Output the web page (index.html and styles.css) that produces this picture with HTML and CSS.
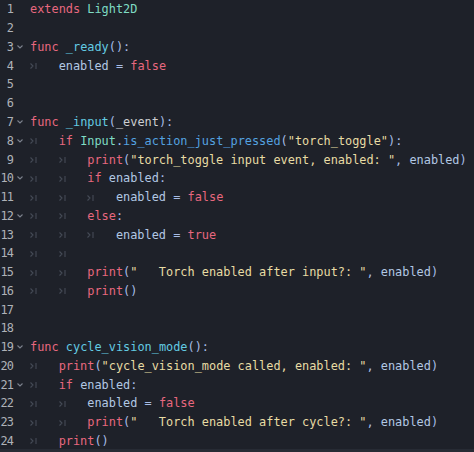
FILE: index.html
```html
<!DOCTYPE html>
<html>
<head>
<meta charset="utf-8">
<link rel="stylesheet" href="styles.css">
</head>
<body>
<div class="editor">
  <div class="line"><span class="num">1</span><span class="fold"></span><span class="code"><span class="kw">extends</span> <span class="ty">Light2D</span></span></div>
  <div class="line"><span class="num">2</span><span class="fold"></span><span class="code"></span></div>
  <div class="line"><span class="num">3</span><span class="fold"><svg viewBox="0 0 6 4" class="chev"><path d="M0.5 0.5 L3 3 L5.5 0.5"/></svg></span><span class="code"><span class="kw">func</span> <span class="fn">_ready</span><span class="sy">():</span></span></div>
  <div class="line"><span class="num">4</span><span class="fold"></span><span class="code"><span class="tab"><svg viewBox="0 0 7 6" class="tm"><path d="M0.5 0.5 L3 3 L0.5 5.5 M6 0 V6"/></svg></span><span class="mv">enabled</span> <span class="sy">=</span> <span class="kw">false</span></span></div>
  <div class="line"><span class="num">5</span><span class="fold"></span><span class="code"></span></div>
  <div class="line"><span class="num">6</span><span class="fold"></span><span class="code"></span></div>
  <div class="line"><span class="num">7</span><span class="fold"><svg viewBox="0 0 6 4" class="chev"><path d="M0.5 0.5 L3 3 L5.5 0.5"/></svg></span><span class="code"><span class="kw">func</span> <span class="fn">_input</span><span class="sy">(</span><span class="tx">_event</span><span class="sy">):</span></span></div>
  <div class="line"><span class="num">8</span><span class="fold"><svg viewBox="0 0 6 4" class="chev"><path d="M0.5 0.5 L3 3 L5.5 0.5"/></svg></span><span class="code"><span class="tab"><svg viewBox="0 0 7 6" class="tm"><path d="M0.5 0.5 L3 3 L0.5 5.5 M6 0 V6"/></svg></span><span class="kw">if</span> <span class="ty">Input</span><span class="sy">.</span><span class="mf">is_action_just_pressed</span><span class="sy">(</span><span class="st">"torch_toggle"</span><span class="sy">):</span></span></div>
  <div class="line"><span class="num">9</span><span class="fold"></span><span class="code"><span class="tab"><svg viewBox="0 0 7 6" class="tm"><path d="M0.5 0.5 L3 3 L0.5 5.5 M6 0 V6"/></svg></span><span class="tab"><svg viewBox="0 0 7 6" class="tm"><path d="M0.5 0.5 L3 3 L0.5 5.5 M6 0 V6"/></svg></span><span class="kw">print</span><span class="sy">(</span><span class="st">"torch_toggle input event, enabled: "</span><span class="sy">, </span><span class="mv">enabled</span><span class="sy">)</span></span></div>
  <div class="line"><span class="num">10</span><span class="fold"><svg viewBox="0 0 6 4" class="chev"><path d="M0.5 0.5 L3 3 L5.5 0.5"/></svg></span><span class="code"><span class="tab"><svg viewBox="0 0 7 6" class="tm"><path d="M0.5 0.5 L3 3 L0.5 5.5 M6 0 V6"/></svg></span><span class="tab"><svg viewBox="0 0 7 6" class="tm"><path d="M0.5 0.5 L3 3 L0.5 5.5 M6 0 V6"/></svg></span><span class="kw">if</span> <span class="mv">enabled</span><span class="sy">:</span></span></div>
  <div class="line"><span class="num">11</span><span class="fold"></span><span class="code"><span class="tab"><svg viewBox="0 0 7 6" class="tm"><path d="M0.5 0.5 L3 3 L0.5 5.5 M6 0 V6"/></svg></span><span class="tab"><svg viewBox="0 0 7 6" class="tm"><path d="M0.5 0.5 L3 3 L0.5 5.5 M6 0 V6"/></svg></span><span class="tab"><svg viewBox="0 0 7 6" class="tm"><path d="M0.5 0.5 L3 3 L0.5 5.5 M6 0 V6"/></svg></span><span class="mv">enabled</span> <span class="sy">=</span> <span class="kw">false</span></span></div>
  <div class="line"><span class="num">12</span><span class="fold"><svg viewBox="0 0 6 4" class="chev"><path d="M0.5 0.5 L3 3 L5.5 0.5"/></svg></span><span class="code"><span class="tab"><svg viewBox="0 0 7 6" class="tm"><path d="M0.5 0.5 L3 3 L0.5 5.5 M6 0 V6"/></svg></span><span class="tab"><svg viewBox="0 0 7 6" class="tm"><path d="M0.5 0.5 L3 3 L0.5 5.5 M6 0 V6"/></svg></span><span class="kw">else</span><span class="sy">:</span></span></div>
  <div class="line"><span class="num">13</span><span class="fold"></span><span class="code"><span class="tab"><svg viewBox="0 0 7 6" class="tm"><path d="M0.5 0.5 L3 3 L0.5 5.5 M6 0 V6"/></svg></span><span class="tab"><svg viewBox="0 0 7 6" class="tm"><path d="M0.5 0.5 L3 3 L0.5 5.5 M6 0 V6"/></svg></span><span class="tab"><svg viewBox="0 0 7 6" class="tm"><path d="M0.5 0.5 L3 3 L0.5 5.5 M6 0 V6"/></svg></span><span class="mv">enabled</span> <span class="sy">=</span> <span class="kw">true</span></span></div>
  <div class="line"><span class="num">14</span><span class="fold"></span><span class="code"><span class="tab"><svg viewBox="0 0 7 6" class="tm"><path d="M0.5 0.5 L3 3 L0.5 5.5 M6 0 V6"/></svg></span><span class="tab"><svg viewBox="0 0 7 6" class="tm"><path d="M0.5 0.5 L3 3 L0.5 5.5 M6 0 V6"/></svg></span></span></div>
  <div class="line"><span class="num">15</span><span class="fold"></span><span class="code"><span class="tab"><svg viewBox="0 0 7 6" class="tm"><path d="M0.5 0.5 L3 3 L0.5 5.5 M6 0 V6"/></svg></span><span class="tab"><svg viewBox="0 0 7 6" class="tm"><path d="M0.5 0.5 L3 3 L0.5 5.5 M6 0 V6"/></svg></span><span class="kw">print</span><span class="sy">(</span><span class="st">"   Torch enabled after input?: "</span><span class="sy">, </span><span class="mv">enabled</span><span class="sy">)</span></span></div>
  <div class="line"><span class="num">16</span><span class="fold"></span><span class="code"><span class="tab"><svg viewBox="0 0 7 6" class="tm"><path d="M0.5 0.5 L3 3 L0.5 5.5 M6 0 V6"/></svg></span><span class="tab"><svg viewBox="0 0 7 6" class="tm"><path d="M0.5 0.5 L3 3 L0.5 5.5 M6 0 V6"/></svg></span><span class="kw">print</span><span class="sy">()</span></span></div>
  <div class="line"><span class="num">17</span><span class="fold"></span><span class="code"></span></div>
  <div class="line"><span class="num">18</span><span class="fold"></span><span class="code"></span></div>
  <div class="line"><span class="num">19</span><span class="fold"><svg viewBox="0 0 6 4" class="chev"><path d="M0.5 0.5 L3 3 L5.5 0.5"/></svg></span><span class="code"><span class="kw">func</span> <span class="fn">cycle_vision_mode</span><span class="sy">():</span></span></div>
  <div class="line"><span class="num">20</span><span class="fold"></span><span class="code"><span class="tab"><svg viewBox="0 0 7 6" class="tm"><path d="M0.5 0.5 L3 3 L0.5 5.5 M6 0 V6"/></svg></span><span class="kw">print</span><span class="sy">(</span><span class="st">"cycle_vision_mode called, enabled: "</span><span class="sy">, </span><span class="mv">enabled</span><span class="sy">)</span></span></div>
  <div class="line"><span class="num">21</span><span class="fold"><svg viewBox="0 0 6 4" class="chev"><path d="M0.5 0.5 L3 3 L5.5 0.5"/></svg></span><span class="code"><span class="tab"><svg viewBox="0 0 7 6" class="tm"><path d="M0.5 0.5 L3 3 L0.5 5.5 M6 0 V6"/></svg></span><span class="kw">if</span> <span class="mv">enabled</span><span class="sy">:</span></span></div>
  <div class="line"><span class="num">22</span><span class="fold"></span><span class="code"><span class="tab"><svg viewBox="0 0 7 6" class="tm"><path d="M0.5 0.5 L3 3 L0.5 5.5 M6 0 V6"/></svg></span><span class="tab"><svg viewBox="0 0 7 6" class="tm"><path d="M0.5 0.5 L3 3 L0.5 5.5 M6 0 V6"/></svg></span><span class="mv">enabled</span> <span class="sy">=</span> <span class="kw">false</span></span></div>
  <div class="line"><span class="num">23</span><span class="fold"></span><span class="code"><span class="tab"><svg viewBox="0 0 7 6" class="tm"><path d="M0.5 0.5 L3 3 L0.5 5.5 M6 0 V6"/></svg></span><span class="tab"><svg viewBox="0 0 7 6" class="tm"><path d="M0.5 0.5 L3 3 L0.5 5.5 M6 0 V6"/></svg></span><span class="kw">print</span><span class="sy">(</span><span class="st">"   Torch enabled after cycle?: "</span><span class="sy">, </span><span class="mv">enabled</span><span class="sy">)</span></span></div>
  <div class="line"><span class="num">24</span><span class="fold"></span><span class="code"><span class="tab"><svg viewBox="0 0 7 6" class="tm"><path d="M0.5 0.5 L3 3 L0.5 5.5 M6 0 V6"/></svg></span><span class="kw">print</span><span class="sy">()</span></span></div>
</div>
<div class="bottom"></div>
</body>
</html>
```
FILE: styles.css
```css
html, body {
  margin: 0;
  padding: 0;
  background: #1e2129;
  width: 474px;
  height: 452px;
  overflow: hidden;
}
body {
  display: flex;
  flex-direction: column;
}
.editor {
  flex: 1;
  padding-top: 0;
  font-family: "DejaVu Sans Mono", monospace;
  font-size: 11.9px;
  color: #cdcfd2;
  overflow: hidden;
}
.line {
  display: flex;
  align-items: center;
  height: 18.78px;
  white-space: pre;
}
.num {
  width: 13px;
  text-align: right;
  color: #aeb2b8;
  flex: none;
  letter-spacing: -0.9px;
  padding-right: 0;
}
.fold {
  width: 17px;
  flex: none;
  display: flex;
  align-items: center;
  padding-left: 4px;
  box-sizing: border-box;
}
.chev {
  width: 6px;
  height: 4px;
  fill: none;
  stroke: #7b818c;
  stroke-width: 1.1;
}
.code {
  flex: 1;
  white-space: pre;
}
.tab {
  display: inline-block;
  width: 4ch;
  vertical-align: middle;
  line-height: 0;
}
.tm {
  width: 7px;
  height: 6px;
  fill: none;
  stroke: #454b57;
  stroke-width: 1.1;
}
.kw { color: #e8687f; }
.ty { color: #7fdcc4; }
.fn { color: #63cbe3; }
.mf { color: #54a2e0; }
.st { color: #e8dca4; }
.mv { color: #b2c8e4; }
.sy { color: #a8bde6; }
.tx { color: #cdcfd2; }
.bottom {
  height: 3px;
  background: #272b34;
  flex: none;
}
```
